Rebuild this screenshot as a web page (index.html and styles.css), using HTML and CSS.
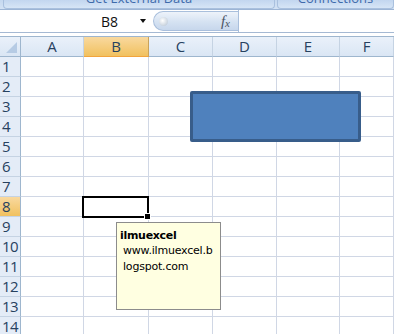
FILE: index.html
```html
<!DOCTYPE html>
<html lang="en">
<head>
    <meta charset="UTF-8">
    <title>Excel comment</title>
    <link rel="stylesheet" href="styles.css">
</head>
<body>
    <div class="ribbon">
        <div class="group group-data"><span>Get External Data</span></div>
        <div class="group group-conn"><span>Connections</span></div>
    </div>

    <div class="formula-bar">
        <div class="name-box">
            <span class="name-text">B8</span>
            <span class="name-arrow"></span>
        </div>
        <div class="fx-pill">
            <span class="pill-knob"></span>
            <span class="fx">f<sub>x</sub></span>
        </div>
        <div class="formula-input"></div>
    </div>

    <div class="sheet">
        <div class="grid" id="grid"></div>

        <!-- shapes lying over the cells -->
        <div class="shape"></div>
        <div class="selection"><span class="handle"></span></div>
        <div class="comment">
            <b>ilmuexcel</b>
            <div class="comment-text">www.ilmuexcel.b<br>logspot.com</div>
        </div>
    </div>

    <script>
        const grid = document.getElementById('grid');
        const cols = ['A', 'B', 'C', 'D', 'E', 'F'];
        let html = '<div class="corner"><span class="corner-tri"></span></div>';
        cols.forEach(c => {
            html += `<div class="col-head${c === 'B' ? ' active' : ''}">${c}</div>`;
        });
        for (let r = 1; r <= 14; r++) {
            html += `<div class="row-head${r === 8 ? ' active' : ''}">${r}</div>`;
            cols.forEach(() => { html += '<div class="cell"></div>'; });
        }
        grid.innerHTML = html;
    </script>
</body>
</html>
```

FILE: styles.css
```css
body {
    margin: 0;
    width: 394px;
    height: 334px;
    overflow: hidden;
    background: #ffffff;
    font-family: 'Open Sans', 'Liberation Sans', sans-serif;
}
.ribbon {
    display: flex;
    height: 10px;
    background: linear-gradient(#c5d8ef, #d3e2f4);
    border-bottom: 1px solid #9db5d5;
    box-sizing: border-box;
    overflow: hidden;
}
.group {
    position: relative;
    height: 8px;
    background: linear-gradient(#c2d6ef, #d6e5f6);
    border: 1px solid #a9c0de;
    border-top: none;
    border-radius: 0 0 4px 4px;
    text-align: center;
    overflow: hidden;
}
.group span {
    display: block;
    margin-top: -9px;
    font-size: 13px;
    line-height: 15px;
    color: #3e6aaa;
}
.group-data {
    width: 270px;
    margin-left: 3px;
}
.group-conn {
    flex: 1;
    margin-left: 2px;
}
.formula-bar {
    display: flex;
    align-items: center;
    height: 23px;
    background: #ffffff;
    border-bottom: 1px solid #a5b9d3;
    box-sizing: border-box;
}
.name-box {
    display: flex;
    align-items: center;
    width: 151px;
    height: 22px;
    background: #ffffff;
}
.name-text {
    width: 118px;
    text-align: right;
    font-size: 14px;
    color: #111;
}
.name-arrow {
    margin-left: 22px;
    width: 0;
    height: 0;
    border-left: 3px solid transparent;
    border-right: 3px solid transparent;
    border-top: 4px solid #111;
}
.fx-pill {
    display: flex;
    align-items: center;
    width: 85px;
    height: 20px;
    margin-left: 2px;
    background: linear-gradient(#eef3fa, #d5e2f2 55%, #c7d7ec);
    border: 1px solid #a9bfdc;
    border-right: none;
    border-radius: 10px 0 0 10px;
    box-sizing: border-box;
}
.pill-knob {
    width: 9px;
    height: 9px;
    margin-left: 5px;
    border-radius: 50%;
    background: radial-gradient(circle at 40% 40%, #ffffff, #c9d3de 70%, #a8b6c6);
}
.fx {
    margin-left: auto;
    margin-right: 8px;
    font-family: 'Liberation Serif', serif;
    font-style: italic;
    font-size: 15px;
    color: #4a5363;
}
.fx sub {
    font-size: 11px;
    vertical-align: -1px;
}
.formula-input {
    flex: 1;
    height: 22px;
    background: #ffffff;
    border-left: 1px solid #a9bfdc;
}
.sheet {
    position: relative;
    margin-top: 3px;
    border-top: 1px solid #9eb6ce;
}
.grid {
    display: grid;
    grid-template-columns: 21px 63px 65px 64px 64px 63px 1fr;
    grid-auto-rows: 20px;
}
.grid > div {
    box-sizing: border-box;
    border-right: 1px solid #d0d7e5;
    border-bottom: 1px solid #d0d7e5;
}
.corner, .col-head, .row-head {
    background: linear-gradient(#eaf1fa, #dae6f4);
    color: #27415f;
    font-size: 15px;
    line-height: 19px;
}
.grid > .corner, .grid > .col-head, .grid > .row-head {
    border-right: 1px solid #9eb6ce;
    border-bottom: 1px solid #9eb6ce;
}
.corner {
    position: relative;
}
.corner-tri {
    position: absolute;
    right: 3px;
    bottom: 3px;
    width: 0;
    height: 0;
    border-left: 11px solid transparent;
    border-bottom: 11px solid #b6cbe4;
}
.col-head {
    text-align: center;
}
.row-head {
    background: #e4ecf7;
    text-align: left;
    padding-left: 2px;
    letter-spacing: -0.5px;
}
.grid > .col-head {
    border-right-color: #c5d3e3;
}
.grid > .row-head {
    border-bottom-color: #c5d3e3;
}
.col-head.active, .row-head.active {
    background: linear-gradient(#f9d99f, #f1c15f);
    color: #27415f;
}
.grid > .col-head.active {
    border-bottom-color: #f2a43d;
    border-right-color: #c9a35c;
}
.shape {
    position: absolute;
    left: 190px;
    top: 54px;
    width: 171px;
    height: 51px;
    box-sizing: border-box;
    background: #4f81bd;
    border: 3px solid #385d8a;
    border-radius: 2px;
}
.selection {
    position: absolute;
    left: 82px;
    top: 159px;
    width: 67px;
    height: 22px;
    box-sizing: border-box;
    border: 2px solid #000;
}
.handle {
    position: absolute;
    right: -4px;
    bottom: -4px;
    width: 5px;
    height: 5px;
    background: #000;
    border: 1px solid #fff;
}
.comment {
    position: absolute;
    left: 116px;
    top: 185px;
    width: 105px;
    height: 88px;
    box-sizing: border-box;
    background: #ffffe1;
    border: 1px solid #8c8c8c;
    padding: 5px 3px;
    font-family: 'DejaVu Sans', sans-serif;
    font-size: 11px;
    line-height: 15px;
    color: #000;
}
.comment b {
    display: block;
    letter-spacing: -0.3px;
}
.comment-text {
    padding-left: 3px;
    line-height: 16px;
    letter-spacing: -0.2px;
}
```
